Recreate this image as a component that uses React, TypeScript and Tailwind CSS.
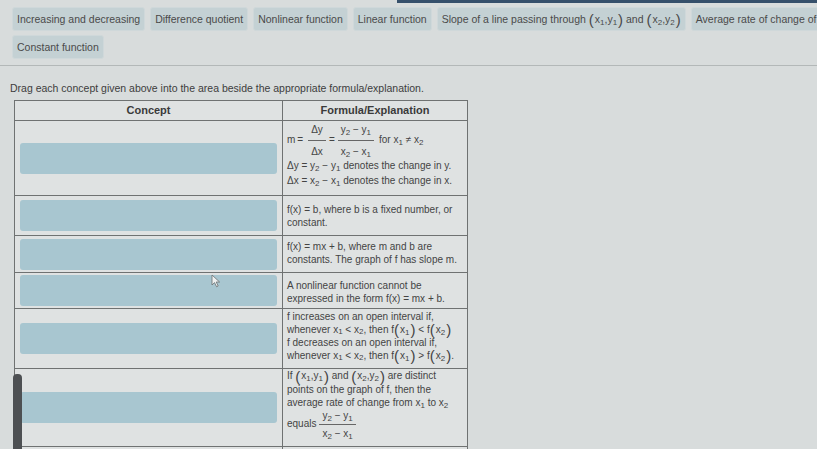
import React from "react";

// Concept chips shown in the bank above the table
const firstRow = [
  "Increasing and decreasing",
  "Difference quotient",
  "Nonlinear function",
  "Linear function",
];

function Chip({ children }: { children: React.ReactNode }) {
  return (
    <div className="flex h-[24px] shrink-0 items-center whitespace-nowrap rounded-[3px] border border-[#cfd8da] bg-[#c4d1d4] px-[4px] text-[10.5px] leading-[14px] text-[#4a4a4a]">
      {children}
    </div>
  );
}

function Sub({ children }: { children: React.ReactNode }) {
  return <sub className="text-[8px]">{children}</sub>;
}

function Paren({ children }: { children: React.ReactNode }) {
  return (
    <span className="inline-flex items-center">
      <span className="text-[15px] font-light leading-none">(</span>
      <span className="px-[1px]">{children}</span>
      <span className="text-[15px] font-light leading-none">)</span>
    </span>
  );
}

function Frac({ n, d, tight }: { n: React.ReactNode; d: React.ReactNode; tight?: boolean }) {
  return (
    <span className="mx-[3px] inline-flex flex-col items-center align-middle">
      <span className={`px-[3px] leading-[13px] ${tight ? "pb-[2px]" : "pb-[4px]"}`}>{n}</span>
      <span className={`border-t border-[#666] px-[3px] leading-[13px] ${tight ? "pt-[2px]" : "pt-[4px]"}`}>
        {d}
      </span>
    </span>
  );
}

const x1 = (
  <>
    x<Sub>1</Sub>
  </>
);
const x2 = (
  <>
    x<Sub>2</Sub>
  </>
);
const y1 = (
  <>
    y<Sub>1</Sub>
  </>
);
const y2 = (
  <>
    y<Sub>2</Sub>
  </>
);

function Row({
  h,
  children,
  last,
}: {
  h: string;
  children: React.ReactNode;
  last?: boolean;
}) {
  return (
    <div className={`flex ${h} ${last ? "" : "border-b border-[#6f7272]"}`}>
      <div className="flex w-[268px] items-center border-r border-[#6f7272] px-[5px]">
        <div className="h-[31px] w-full rounded-[3px] bg-[#a8c6d0]" />
      </div>
      <div className="flex-1 px-[4px] py-[2px] text-[10px] leading-[12.5px] text-[#444]">
        {children}
      </div>
    </div>
  );
}

export default function App() {
  return (
    <div className="relative h-[449px] w-[817px] overflow-hidden bg-[#d8dcdc] font-['Liberation_Sans',Arial,sans-serif] text-[#3d3d3d]">
      <div className="absolute right-0 top-0 h-[3px] w-[420px] bg-[#36506b]" />

      {/* concept bank */}
      <div className="h-[66px] border-b border-[#b3b8b8] pl-[12px] pt-[7px]">
        <div className="flex items-center gap-[5px]">
          {firstRow.map((c) => (
            <Chip key={c}>{c}</Chip>
          ))}
          <Chip>
            <span className="inline-flex items-center">
              Slope of a line passing through&nbsp;
              <Paren>
                {x1},{y1}
              </Paren>
              &nbsp;and&nbsp;
              <Paren>
                {x2},{y2}
              </Paren>
            </span>
          </Chip>
          <Chip>Average rate of change of f from x</Chip>
        </div>
        <div className="mt-[4px] flex">
          <Chip>Constant function</Chip>
        </div>
      </div>

      <p className="ml-[10px] mt-[15px] text-[10.5px] leading-[14px] text-[#3d3d3d]">
        Drag each concept given above into the area beside the appropriate formula/explanation.
      </p>

      {/* matching table */}
      <div className="ml-[14px] mt-[5px] w-[454px] border border-[#6f7272] bg-[#dfe2e2]">
        <div className="flex h-[20px] border-b border-[#6f7272] text-[11px] font-bold text-[#3a3a3a]">
          <div className="flex w-[268px] items-center justify-center border-r border-[#6f7272]">
            Concept
          </div>
          <div className="flex flex-1 items-center justify-center">Formula/Explanation</div>
        </div>

        <Row h="h-[75px]">
          <div className="flex items-center">
            m
            <span className="mx-[2px]">=</span>
            <Frac n="Δy" d="Δx" />
            <span>=</span>
            <Frac
              n={
                <>
                  {y2} − {y1}
                </>
              }
              d={
                <>
                  {x2} − {x1}
                </>
              }
            />
            <span className="ml-[2px]">
              for {x1} ≠ {x2}
            </span>
          </div>
          <div className="mt-[2px]">
            Δy = {y2} − {y1} denotes the change in y.
          </div>
          <div className="mt-[2px]">
            Δx = {x2} − {x1} denotes the change in x.
          </div>
        </Row>

        <Row h="h-[40px]">
          <div className="pt-[6px]">f(x) = b, where b is a fixed number, or constant.</div>
        </Row>

        <Row h="h-[37px]">
          <div className="pt-[3px]">
            f(x) = mx + b, where m and b are constants. The graph of f has slope m.
          </div>
        </Row>

        <Row h="h-[36px]">
          <div className="pt-[5px]">
            A nonlinear function cannot be expressed in the form f(x) = mx + b.
          </div>
        </Row>

        <Row h="h-[60px]">
          <div className="leading-[11px]">
            <div>f increases on an open interval if,</div>
            <div className="flex items-center">
              whenever {x1}&nbsp;&lt;&nbsp;{x2}, then f<Paren>{x1}</Paren>&nbsp;&lt;&nbsp;f
              <Paren>{x2}</Paren>
            </div>
            <div>f decreases on an open interval if,</div>
            <div className="flex items-center">
              whenever {x1}&nbsp;&lt;&nbsp;{x2}, then f<Paren>{x1}</Paren>&nbsp;&gt;&nbsp;f
              <Paren>{x2}</Paren>.
            </div>
          </div>
        </Row>

        <Row h="h-[78px]">
          <div className="-mt-[2px] flex items-center">
            If&nbsp;
            <Paren>
              {x1},{y1}
            </Paren>
            &nbsp;and&nbsp;
            <Paren>
              {x2},{y2}
            </Paren>
            &nbsp;are distinct
          </div>
          <div>points on the graph of f, then the</div>
          <div>
            average rate of change from {x1} to {x2}
          </div>
          <div className="flex items-center">
            equals
            <Frac
              tight
              n={
                <>
                  {y2} − {y1}
                </>
              }
              d={
                <>
                  {x2} − {x1}
                </>
              }
            />
          </div>
        </Row>

        <Row h="h-[40px]" last>
          <div>Calculate the average rate of change of f from</div>
        </Row>
      </div>

      {/* mouse pointer over the table */}
      <svg
        className="absolute left-[211px] top-[274px]"
        width="10"
        height="14"
        viewBox="0 0 10 14"
      >
        <path
          d="M1 1 L1 11 L3.5 8.6 L5.6 12.8 L7.2 12 L5.2 8 L8.6 8 Z"
          fill="#eef1f1"
          stroke="#6b6f70"
          strokeWidth="0.8"
          strokeLinejoin="round"
        />
      </svg>

      {/* dark edge of the monitor bezel */}
      <div className="absolute left-[13px] top-[374px] h-[80px] w-[9px] rounded-t-[4px] bg-[#4d5053]" />
    </div>
  );
}
